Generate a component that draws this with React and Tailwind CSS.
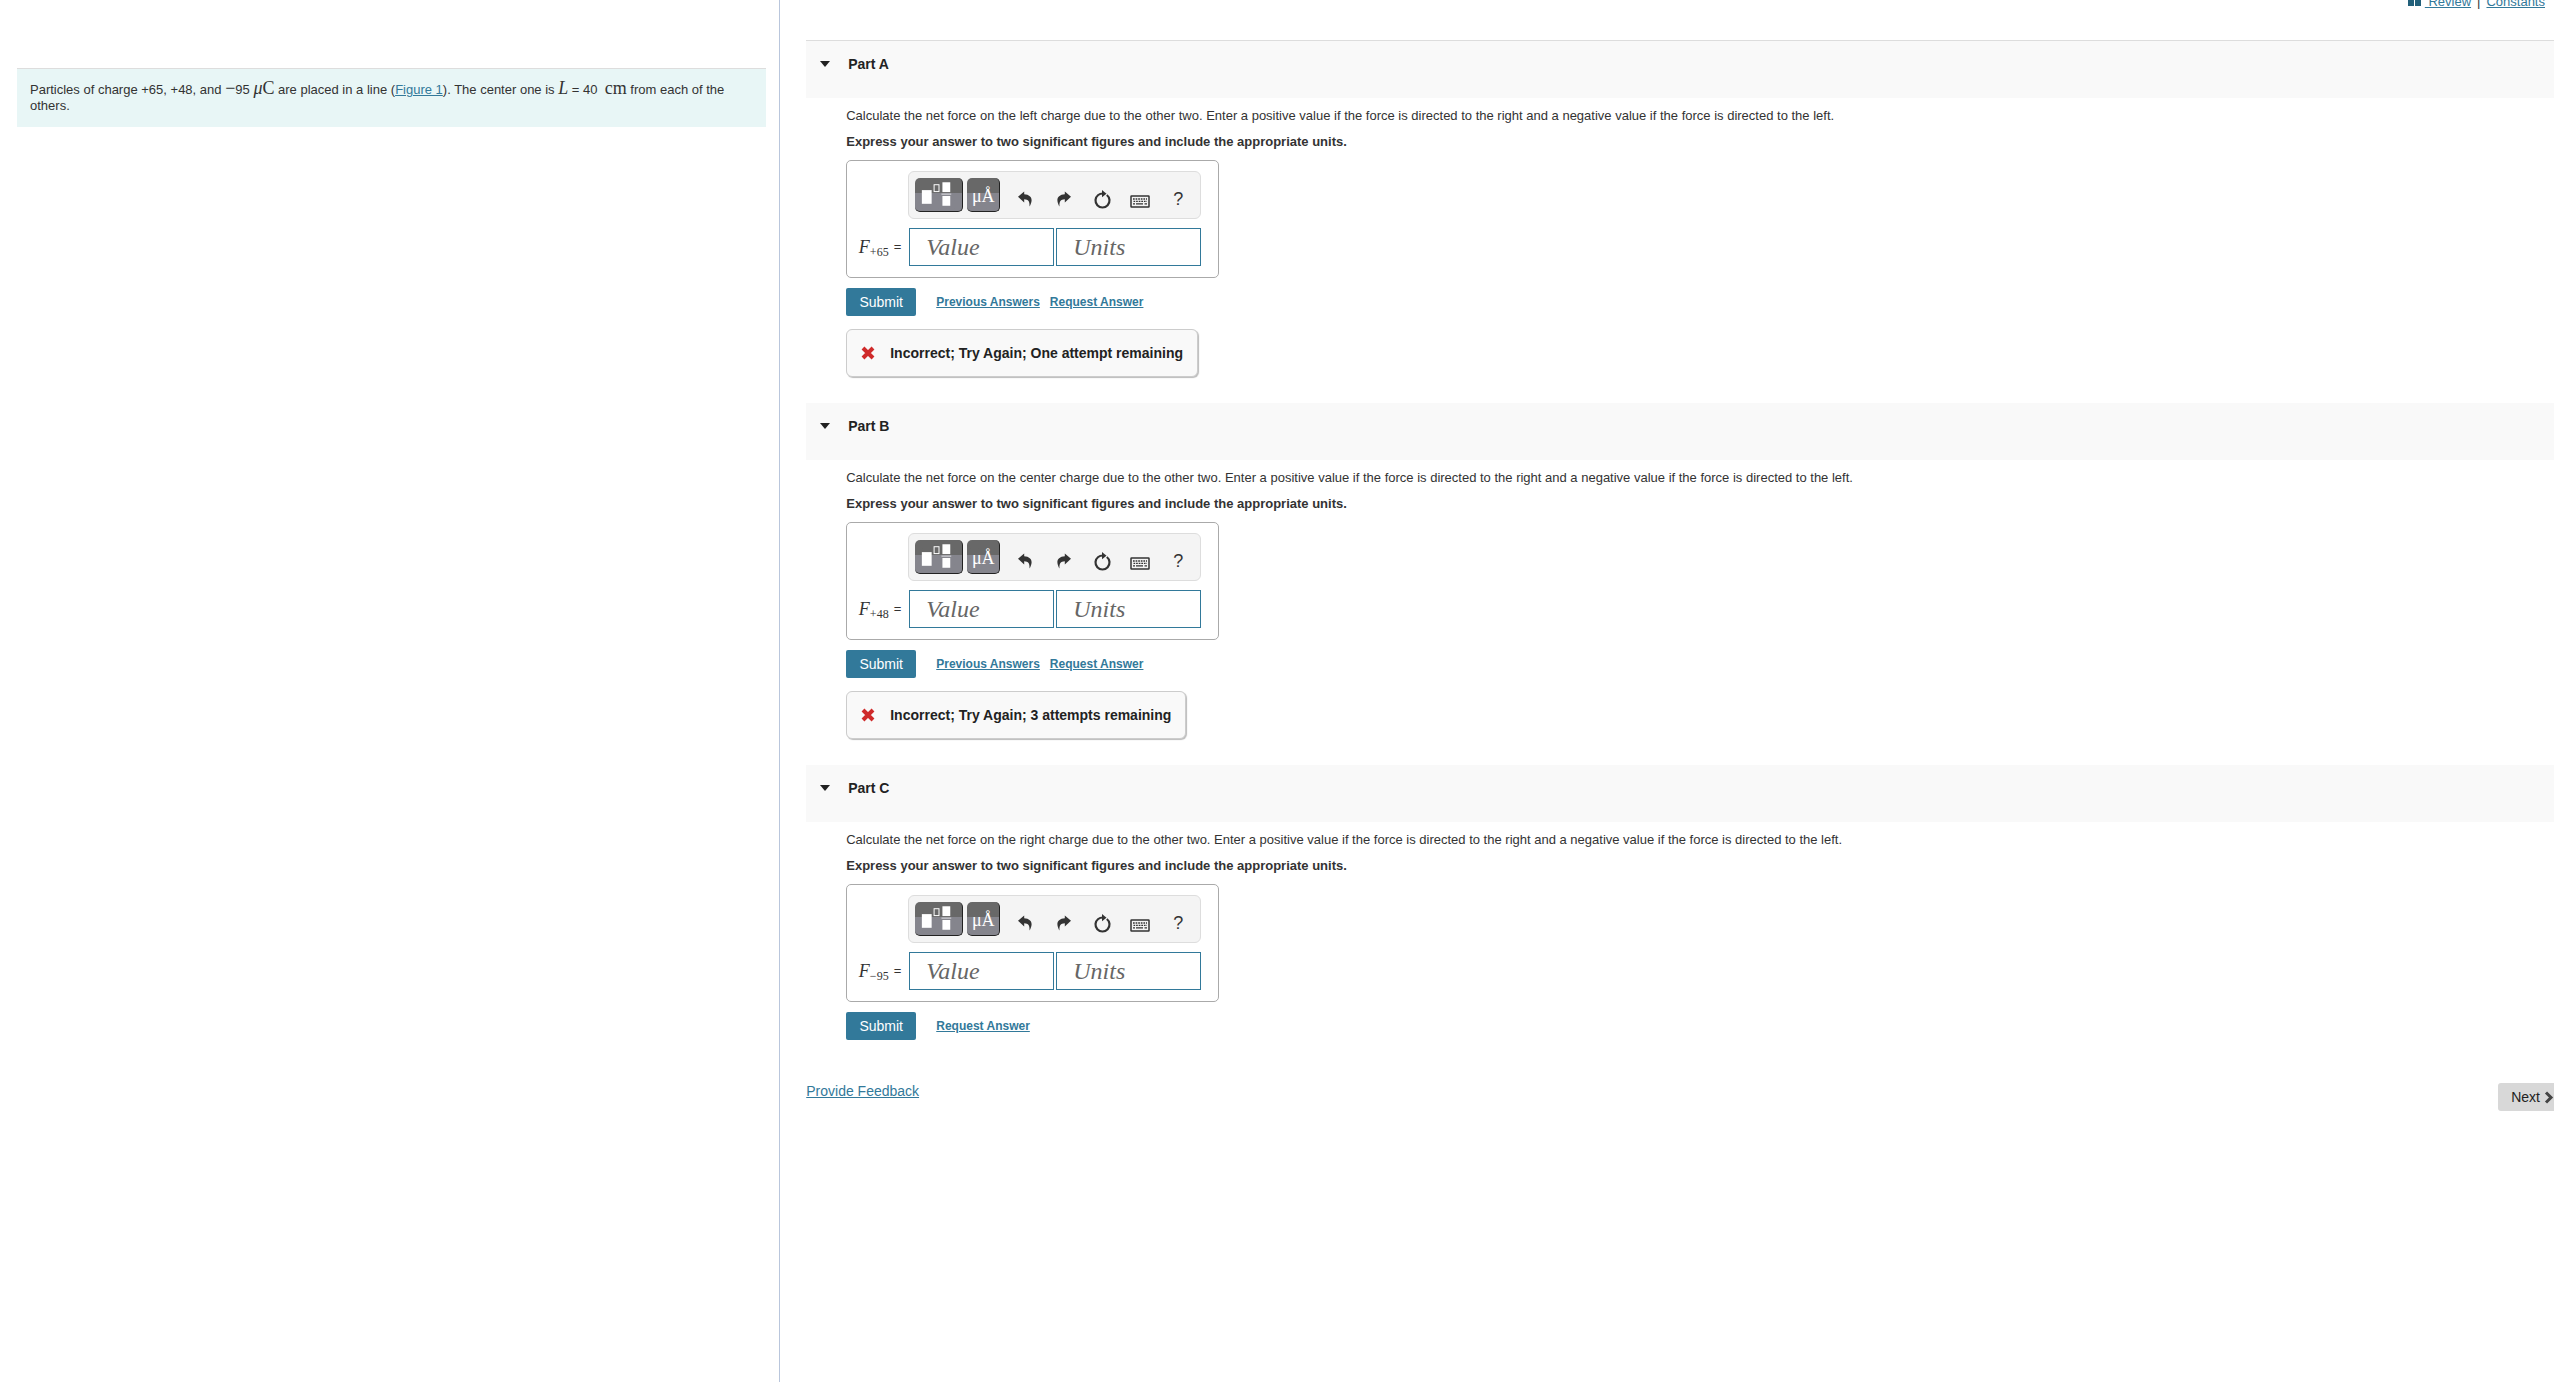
const SANS = "font-['Liberation_Sans',Arial,sans-serif]";
const SERIF = "font-['Liberation_Serif','Times_New_Roman',serif]";
const MATH = "text-[18px] leading-4 " + SERIF;

const parts = [
  { id: "A", which: "left", sub: "+65", previous: true, feedback: "Incorrect; Try Again; One attempt remaining" },
  { id: "B", which: "center", sub: "+48", previous: true, feedback: "Incorrect; Try Again; 3 attempts remaining" },
  { id: "C", which: "right", sub: "−95", previous: false, feedback: null },
];

function TemplatesIcon() {
  return (
    <svg width="48" height="34" viewBox="0 0 48 34" aria-hidden="true">
      <rect x="7" y="12" width="10" height="14" fill="#fff" />
      <rect x="19.5" y="6.500" width="5" height="7" fill="none" stroke="#fff" />
      <rect x="28" y="4" width="8" height="10" fill="#fff" />
      <rect x="27" y="15.500" width="10" height="1.200" fill="#d5d5d8" />
      <rect x="28" y="18" width="8" height="10" fill="#fff" />
    </svg>
  );
}

function UndoIcon({ flip }) {
  return (
    <svg width="14" height="16" viewBox="0 0 14 16" aria-hidden="true" className={flip ? "-scale-x-100" : ""}>
      <path d="M0 5.800 L6.200 0.500 V3.300 C11 3.500 13.800 6.200 13.600 9.500 C13.500 11.500 12.600 13.800 11.500 15.500 C11.800 10.500 10.500 8.400 6.200 8.300 V11.400 Z" fill="#333" />
    </svg>
  );
}

function ResetIcon() {
  return (
    <svg width="17" height="19" viewBox="0 0 17 19" aria-hidden="true">
      <path d="M12.800 5 A7 7 0 1 1 4.200 5 Q6 3.600 9 3.500" fill="none" stroke="#333" strokeWidth="2.200" />
      <path d="M8 0 L12.500 3.800 L8 7.200 Z" fill="#333" />
    </svg>
  );
}

function KeyboardIcon() {
  return (
    <svg width="20" height="13" viewBox="0 0 20 13" aria-hidden="true">
      <rect x="1" y="1" width="18" height="11" rx="0.500" fill="none" stroke="#333" strokeWidth="1.500" />
      <path d="M3 4 H17 M3.500 6.300 H17" stroke="#333" strokeWidth="1.300" strokeDasharray="1.700 0.900" />
      <path d="M3 8.900 H5 M6 8.900 H13 M14.500 8.900 H17" stroke="#333" strokeWidth="1.300" />
    </svg>
  );
}

function CrossIcon() {
  return (
    <svg width="14" height="14" viewBox="0 0 14 14" aria-hidden="true">
      <path d="M2 2 L12 12 M12 2 L2 12" stroke="#cf2a2a" strokeWidth="4" />
    </svg>
  );
}

const darkButton =
  "flex h-[34px] shrink-0 items-center justify-center rounded-[5px] border-r border-b border-[#222] bg-linear-to-b from-[#686868] from-45% to-[#85858d] to-45% text-white";

function Toolbar() {
  return (
    <div className="flex h-[48px] w-[293px] items-start rounded-[6px] border border-[#ddd] bg-[#f4f4f4] pt-[6px] pl-[6px]">
      <button type="button" aria-label="Templates" className={darkButton + " w-[48px]"}>
        <TemplatesIcon />
      </button>
      <button type="button" aria-label="Symbols" className={darkButton + " ml-1 w-[33px] pt-[2px] text-[18px] leading-5 " + SERIF}>
        μÅ
      </button>
      <div className="mt-2 ml-[18px] flex h-[26px] items-center">
        <button type="button" aria-label="Undo" className="w-[39px]"><UndoIcon /></button>
        <button type="button" aria-label="Redo" className="w-[37px]"><UndoIcon flip /></button>
        <button type="button" aria-label="Reset" className="w-[36px]"><ResetIcon /></button>
        <button type="button" aria-label="Keyboard shortcuts" className="mt-1 w-[43px]"><KeyboardIcon /></button>
        <button type="button" aria-label="Help" className="text-[18px] leading-5 text-[#333]">?</button>
      </div>
    </div>
  );
}

const field =
  "h-[38px] w-[145px] border border-[#32799a] bg-white pl-4 text-[24px] italic text-[#666] outline-none placeholder:text-[#666] " + SERIF;

function Part({ id, which, sub, previous, feedback }) {
  return (
    <section>
      <h2 className={"flex items-start bg-[#f9f9f9] pt-[13px] pl-[14px] text-[14px] leading-5 font-bold text-[#222] " + (id === "A" ? "h-[58px] border-t border-[#ddd]" : "h-[57px]")}>
        <button type="button" className="flex items-center gap-[18px]">
          <svg width="10" height="6" viewBox="0 0 10 6" aria-hidden="true"><path d="M0 0 H10 L5 6 Z" fill="#222" /></svg>
          Part {id}
        </button>
      </h2>
      <div className="pl-10 text-[13px] text-[#333]">
        <p className="pt-[9px] leading-[18px]">
          Calculate the net force on the {which} charge due to the other two. Enter a positive value if the force is directed to the right and a negative value if the force is directed to the left.
        </p>
        <p className="mt-2 leading-[18px] font-bold">Express your answer to two significant figures and include the appropriate units.</p>
        <div className="mt-[9px] flex h-[118px] w-[373px] flex-col items-end rounded-[5px] border border-[#aaa] pt-[10px] pr-[17px]">
          <Toolbar />
          <div className="mt-[9px] flex items-center">
            <span className={"text-[18px] leading-5 whitespace-nowrap " + SERIF}>
              <i>F</i><sub className="text-[12px]">{sub}</sub>
            </span>
            <span className="mr-2 ml-[5px] text-[13px]">=</span>
            <input aria-label={"Value, part " + id} placeholder="Value" className={field} />
            <input aria-label={"Units, part " + id} placeholder="Units" className={field + " ml-[2px]"} />
          </div>
        </div>
        <div className="mt-[10px] flex h-[28px] items-center text-[12px] font-bold text-[#32799a]">
          <button type="button" className="mr-5 h-[28px] w-[70px] rounded-[2px] bg-[#32799a] text-[14px] font-normal text-white">Submit</button>
          {previous && <a href="#previous" className="mr-[10px] underline">Previous Answers</a>}
          <a href="#request" className="underline">Request Answer</a>
        </div>
        {feedback && (
          <div className="mt-[13px] mb-[26px] flex h-[48px] w-fit items-center gap-[15px] rounded-[6px] border border-[#ccc] bg-[#f9f9f9] px-[14px] text-[14px] font-bold text-[#222] shadow-[1px_1px_1px_#bbb]">
            <CrossIcon />
            {feedback}
          </div>
        )}
      </div>
    </section>
  );
}

export default function App() {
  return (
    <div className={"flex min-h-screen overflow-hidden bg-white text-[#333] " + SANS}>
      <aside className="w-[30.55%] shrink-0 border-r border-[#b9c6dc] pt-[68px] pr-[13px] pl-[17px]">
        <p className="min-h-[59px] border-t border-[#ddd] bg-[#e8f6f6] px-[13px] pt-[11px] text-[13px] leading-4">
          Particles of charge +65, +48, and <span className={MATH}>−</span>95 <span className={MATH}><i>μ</i>C</span> are placed in a line (<a href="#figure" className="text-[#32799a] underline">Figure 1</a>). The center one is <i className={MATH}>L</i> = 40&nbsp; <span className={MATH}>cm</span> from each of the others.
        </p>
      </aside>
      <main className="min-w-0 flex-1 pl-[26px]">
        <nav className="-mt-[7px] flex h-[47px] items-start justify-end pr-[9px] text-[13px] leading-[18px]">
          <svg width="13" height="12" viewBox="0 0 13 12" className="mt-px mr-1" aria-hidden="true"><path d="M0 0H6V12H0ZM7 0H13V12H7Z" fill="#22607a" /></svg>
          <a href="#review" className="text-[#32799a] underline">&nbsp;Review</a>
          <span className="mx-[6px]">|</span>
          <a href="#constants" className="text-[#32799a] underline">Constants</a>
        </nav>
        {parts.map((p) => <Part key={p.id} {...p} />)}
        <footer className="mt-[43px] flex items-start justify-between text-[14px] leading-4">
          <a href="#feedback" className="text-[#32799a] underline">Provide Feedback</a>
          <button type="button" className="flex h-[28px] items-center gap-1 rounded-l-[3px] bg-[#d8d8d8] pl-[13px] text-[#222]">
            Next
            <svg width="10" height="13" viewBox="0 0 10 13" aria-hidden="true"><path d="M2 1.500 L7 6.500 L2 11.500" fill="none" stroke="#444" strokeWidth="3" /></svg>
          </button>
        </footer>
      </main>
    </div>
  );
}
